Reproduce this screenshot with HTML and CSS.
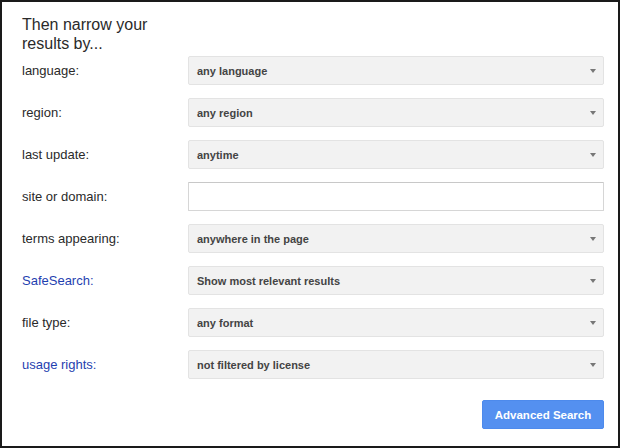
FILE: index.html
```html
<!DOCTYPE html>
<html lang="en">
<head>
    <meta charset="UTF-8">
    <meta name="viewport" content="width=device-width, initial-scale=1.0">
    <title>Advanced Search</title>
    <link rel="stylesheet" href="styles.css">
</head>
<body>
    <div class="panel">
        <h2 class="title">Then narrow your<br>results by...</h2>

        <div class="form">
            <label class="label">language:</label>
            <div class="dropdown"><span>any language</span><span class="arrow"></span></div>

            <label class="label">region:</label>
            <div class="dropdown"><span>any region</span><span class="arrow"></span></div>

            <label class="label">last update:</label>
            <div class="dropdown"><span>anytime</span><span class="arrow"></span></div>

            <label class="label">site or domain:</label>
            <input class="text-field" type="text">

            <label class="label">terms appearing:</label>
            <div class="dropdown"><span>anywhere in the page</span><span class="arrow"></span></div>

            <a class="label link" href="#">SafeSearch:</a>
            <div class="dropdown"><span>Show most relevant results</span><span class="arrow"></span></div>

            <label class="label">file type:</label>
            <div class="dropdown"><span>any format</span><span class="arrow"></span></div>

            <a class="label link" href="#">usage rights:</a>
            <div class="dropdown"><span>not filtered by license</span><span class="arrow"></span></div>
        </div>

        <div class="actions">
            <button class="button">Advanced Search</button>
        </div>
    </div>
</body>
</html>
```

FILE: styles.css
```css
* {
    margin: 0;
    padding: 0;
    box-sizing: border-box;
}

body {
    font-family: Arial, "Liberation Sans", sans-serif;
    background: white;
    color: #222;
}

.panel {
    width: 620px;
    height: 448px;
    border: 2px solid #1a1a1a;
    padding: 13px 14px 0 20px;
}

.title {
    font-size: 16px;
    font-weight: normal;
    line-height: 19px;
    color: #2a2a2a;
    margin-bottom: 3px;
}

.form {
    display: grid;
    grid-template-columns: 166px 416px;
    grid-auto-rows: 29px;
    row-gap: 13px;
    align-items: center;
}

.label {
    font-size: 13px;
    color: #2a2a2a;
}

.link {
    color: #1f3fb0;
    text-decoration: none;
}

.dropdown {
    height: 29px;
    display: flex;
    align-items: center;
    justify-content: space-between;
    padding: 0 7px 0 8px;
    background: #f2f2f2;
    border: 1px solid #e3e3e3;
    border-radius: 2px;
    font-size: 11px;
    font-weight: bold;
    color: #444;
}

.arrow {
    width: 0;
    height: 0;
    border-left: 3.5px solid transparent;
    border-right: 3.5px solid transparent;
    border-top: 4px solid #777;
}

.text-field {
    height: 29px;
    width: 100%;
    background: white;
    border: 1px solid #d6d6d6;
    border-top-color: #c8c8c8;
    border-radius: 1px;
}

.actions {
    display: flex;
    justify-content: flex-end;
    width: 584px;
    margin-top: 21px;
}

.button {
    width: 122px;
    height: 29px;
    margin-right: 2px;
    background: #5490f0;
    border: 1px solid #4d8aec;
    border-radius: 2px;
    color: white;
    font-family: Arial, "Liberation Sans", sans-serif;
    font-size: 11.5px;
    font-weight: bold;
}
```
